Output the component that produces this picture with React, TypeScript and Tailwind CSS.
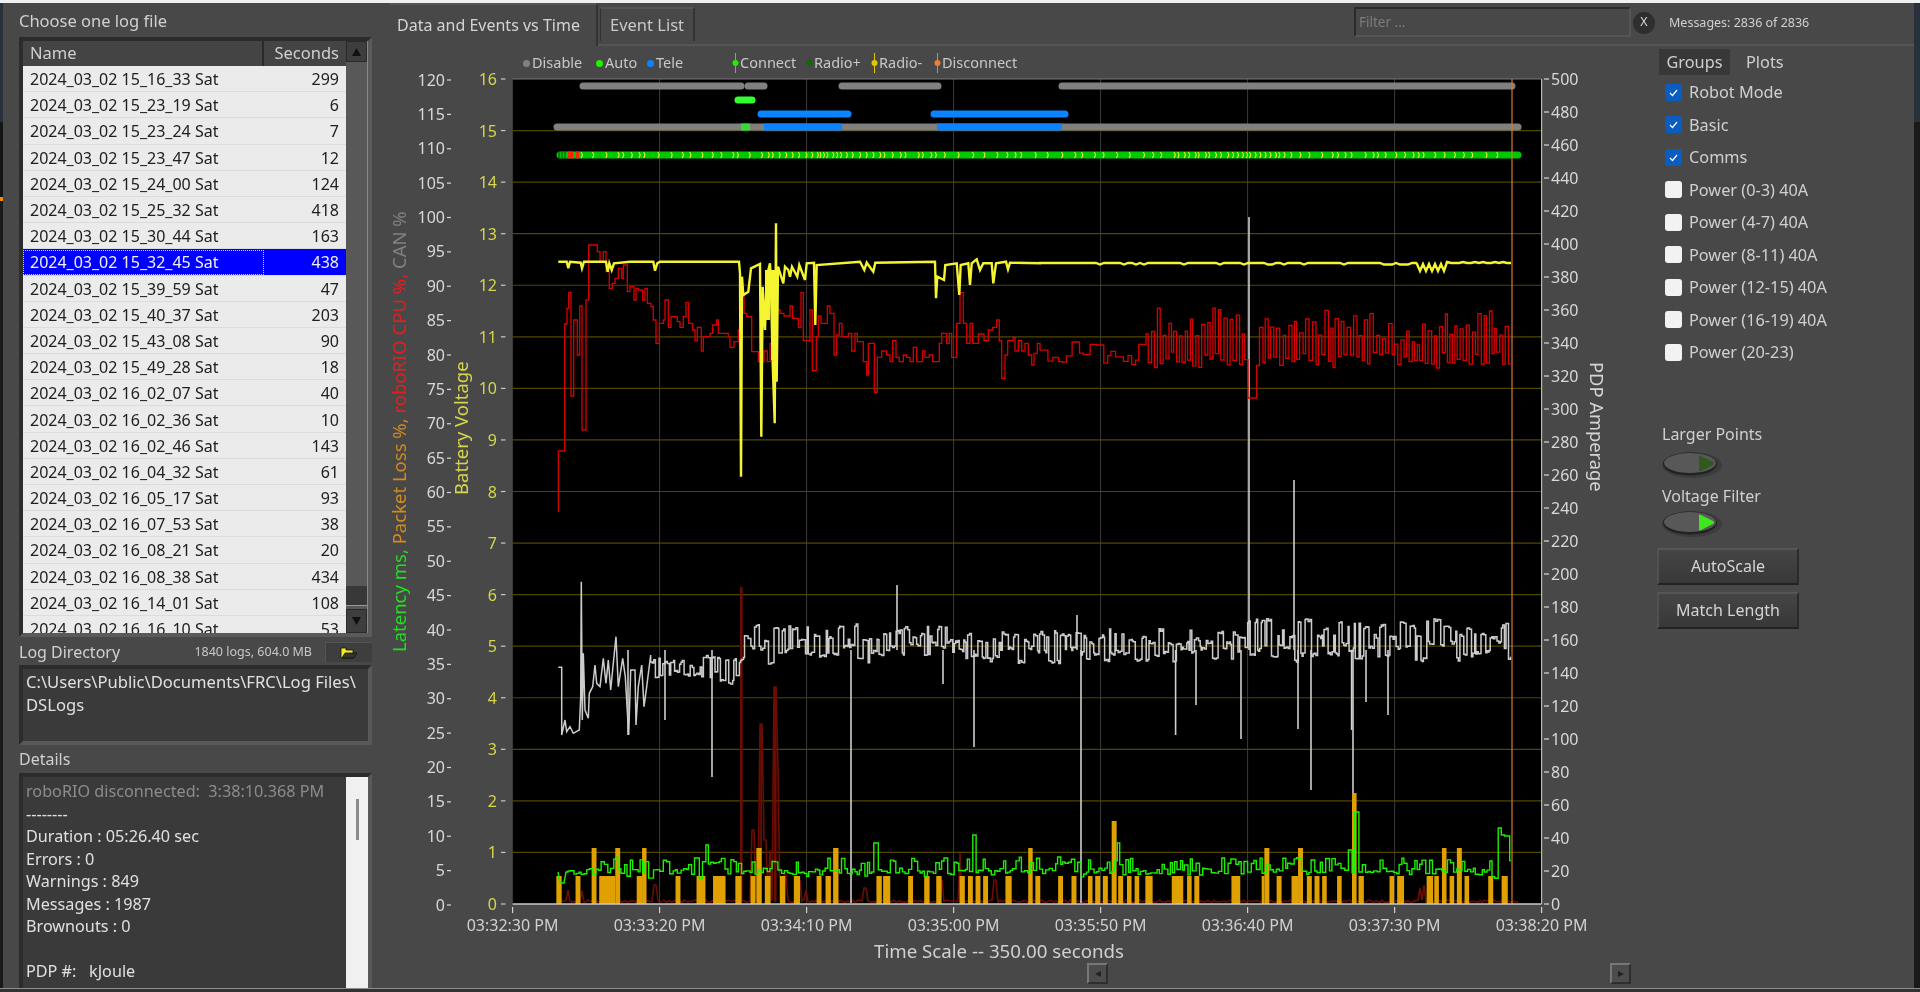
const font = { fontFamily: '"Noto Sans", "Liberation Sans", sans-serif' };

const logs: [string, number][] = [
  ["15_16_33", 299], ["15_23_19", 6], ["15_23_24", 7], ["15_23_47", 12], ["15_24_00", 124], ["15_25_32", 418],
  ["15_30_44", 163], ["15_32_45", 438], ["15_39_59", 47], ["15_40_37", 203], ["15_43_08", 90], ["15_49_28", 18],
  ["16_02_07", 40], ["16_02_36", 10], ["16_02_46", 143], ["16_04_32", 61], ["16_05_17", 93], ["16_07_53", 38],
  ["16_08_21", 20], ["16_08_38", 434], ["16_14_01", 108], ["16_16_10", 53],
];

const groups = [
  ["Robot Mode", true], ["Basic", true], ["Comms", true], ["Power (0-3) 40A", false], ["Power (4-7) 40A", false],
  ["Power (8-11) 40A", false], ["Power (12-15) 40A", false], ["Power (16-19) 40A", false], ["Power (20-23)", false],
] as [string, boolean][];

// little seeded random so the chart comes out the same every run
function rng(seed: number) {
  let a = seed;
  return () => {
    a = (a + 0x6d2b79f5) | 0;
    let t = Math.imul(a ^ (a >>> 15), 1 | a);
    t = (t + Math.imul(t ^ (t >>> 7), 61 | t)) ^ t;
    return ((t ^ (t >>> 14)) >>> 0) / 4294967296;
  };
}

const PL = 512.6, PR = 1541.6, PT = 79, PB = 904;
const line = (p: number[][]) => p.map((q, i) => (i ? "L" : "M") + q[0].toFixed(1) + " " + q[1].toFixed(1)).join(" ");

// CPU: [x, level] held until next x, read off a 3x crop
const redSteps = [67,693,74,312,81,265,86,218,93,528,101,300,112,405,119,258,126,630,138,240,146,75,172,95,180,125,190,95,198,155,208,205,217,190,225,175,235,145,245,175,250,135,262,215,270,200,282,240,288,205,295,210,308,240,315,205,322,250,333,260,340,300,348,370,358,310,370,300,375,240,385,322,393,290,412,305,420,322,430,290,438,248,446,310,458,330,465,362,472,322,484,393,490,350,510,340,518,315,530,300,535,340,565,350,570,382,582,365,595,330,605,230,612,280,620,290,635,395,655,425,660,340,665,425,672,393,682,425,690,370,697,340,712,270,720,280,732,288,750,258,758,295,775,322,783,218,790,362,810,270,817,452,829,350,835,288,843,310,862,258,870,280,882,405,890,345,898,310,906,350,925,340,935,393,945,340,952,365,970,425,980,465,985,370,1003,517,1012,412,1025,393,1040,405,1050,425,1058,362,1068,412,1078,425,1090,405,1100,412,1110,425,1120,382,1130,425,1148,393,1155,412,1168,405,1178,425,1198,370,1205,340,1220,370,1228,340,1235,412,1250,310,1260,218,1270,310,1280,370,1290,310,1298,370,1315,342,1332,362,1345,330,1358,322,1370,300,1378,362,1385,475,1395,405,1403,362,1420,352,1425,393,1435,362,1445,393,1455,370,1465,405,1475,435,1482,400,1492,370];

function redPath() {
  const pts: number[][] = [[558.3, 512], [558.3, 220 + 693 / 3]];
  for (let i = 0; i < redSteps.length; i += 2) {
    const x = 540 + redSteps[i] / 3, y = 220 + redSteps[i + 1] / 3;
    pts.push([x, pts[pts.length - 1][1]], [x, y]);
  }
  const r = rng(7);
  let x = 1040, up = true;
  while (x < 1511) {
    let y = 350 + r() * 16;
    if (x > 1145) {
      const top = x > 1370 && x < 1440 ? 322 : 308;
      y = up ? top + r() * 28 : 352 + r() * 16;
      if (Math.abs(x - 1251) < 3) y = 398;
    } else if (r() > 0.8) {
      y = 340 + r() * 8;
    }
    pts.push([x, pts[pts.length - 1][1]], [x, y]);
    up = !up;
    x += x > 1145 ? 2 + r() * 1.6 : 3 + r() * 5;
  }
  pts.push([1511, pts[pts.length - 1][1]]);
  return line(pts);
}

const yellowPts = [[55,125],[80,125],[85,145],[90,125],[122,128],[126,145],[132,125],[198,125],[203,155],[208,130],[215,150],[222,130],[270,125],[340,125],[345,152],[352,130],[360,125],[597,125],[600,160],[603,770],[606,170],[610,225],[625,215],[633,145],[660,132],[664,650],[668,200],[675,330],[680,170],[690,130],[692,170],[698,430],[704,610],[708,10],[710,485],[714,140],[730,190],[735,140],[745,150],[750,170],[756,140],[772,170],[778,135],[795,180],[800,130],[822,128],[826,315],[830,135],[960,125],[973,150],[980,128],[1000,155],[1006,128],[1185,125],[1188,235],[1192,170],[1212,180],[1216,135],[1250,130],[1258,225],[1262,135],[1285,130],[1290,195],[1295,130],[1310,118],[1320,150],[1330,130],[1355,130],[1360,190],[1368,130],[1398,125],[1404,148],[1410,128],[1500,130]];

function yellowPath() {
  const pts = yellowPts.map(([x, y]) => [540 + x / 3, 220 + y / 3]);
  const r = rng(3);
  for (let x = 1040; x < 1417; x += 4) pts.push([x, 263 + (r() > 0.8 ? 1.5 : 0)]);
  for (let x = 1417; x < 1447; x += 3) pts.push([x, x % 2 < 1 ? 271 : 264]);
  for (let x = 1447; x <= 1511; x += 4) pts.push([x, 263 - (r() > 0.6 ? 1 : 0)]);
  return line(pts);
}

const whiteStart = [[55,322],[65,322],[65,525],[75,480],[80,515],[90,500],[100,520],[118,510],[122,410],[124,65],[127,480],[130,280],[135,450],[145,475],[148,400],[158,380],[165,315],[170,370],[180,380],[190,295],[198,370],[205,300],[212,390],[220,310],[228,230],[235,380],[248,295],[256,350],[266,525],[272,330],[285,330],[288,495],[295,380],[305,315],[312,440],[320,380],[332,285]];

function whiteBand(x: number): [number, number] {
  if (x < 740) return [669, 14];
  if (x < 860) return [643, 24];
  if (x < 1000) return [648 - (x > 880 && x < 950 ? 8 : 0), 18];
  if (x < 1240) return [646, 17];
  return [640, 22];
}

function whitePath() {
  const pts = whiteStart.map(([x, y]) => [540 + x / 3, 560 + y / 3]);
  const r = rng(11);
  let x = pts[pts.length - 1][0], hi = true;
  while (x < 1511) {
    const [c, a] = whiteBand(x);
    const target = c + (hi ? -a : a) * (0.1 + r() * 0.85);
    const n = 1 + Math.floor(r() * 4);
    for (let j = 0; j < n; j++) {
      const y = target + (r() - 0.5) * 4;
      pts.push([x, pts[pts.length - 1][1]], [x, y]);
      x += 0.9 + r() * 1.2;
    }
    hi = !hi;
  }
  return line(pts);
}

// down spikes [x, end y], up spikes go the same way
const whiteSpikes = [[628,735],[665,720],[712,777],[851,903],[943,684],[974,747],[1081,903],[1175.6,735],[1196,705],[1241,739],[1298,729],[1311,790],[1351.6,730],[1353,793],[1366,702],[1388,715],[1249,217],[1294,480],[897,585],[1077,615]];

function greenPath() {
  const pts: number[][] = [[558, 872], [560, 883], [564, 883], [566, 872]];
  const r = rng(21);
  const peaks: [number, number][] = [[705,845],[875,843],[972,835],[1117,843],[1355,812],[1356,812],[1357,822],[1499,828],[1502,835],[1504,836],[1506,836],[1348,850],[696,858]];
  let x = 568, prev = 872;
  while (x < 1510) {
    const hit = peaks.find((p) => Math.abs(p[0] - x) < 1.7);
    let y = 868 + r() * 7;
    const q = r();
    if (q > 0.72) y = 857 + r() * 8;
    if (q < 0.05) y = 876 + r() * 3;
    if (hit) y = hit[1];
    pts.push([x, prev], [x, y]);
    prev = y;
    x += 1.8 + r() * 2;
  }
  pts.push([1511, prev]);
  return line(pts);
}

function darkRedPath() {
  const pts: number[][] = [[558, 902]];
  const r = rng(5);
  const bumps: [number, number][] = [[568,890],[582,891],[655,885],[753,830],[761,724],[765,840],[770,850],[775,687],[778,770],[785,875],[800,880],[806,890],[865,888],[942,880],[960,853],[995,880],[1420,888],[1424,885],[1430,892]];
  for (let x = 558; x < 1520; x += 2) {
    const b = bumps.find((p) => Math.abs(p[0] - x) < 1.2);
    pts.push([x, b ? b[1] : 900 + r() * 2.6]);
  }
  return line(pts);
}

// loss bars, [x0, x1, top y]
const LOW = 876, TALL = 848;
const lossA = [[395,407,LOW],[438,449,LOW],[474,485,TALL],[491,527,LOW],[527,538,TALL],[575,587,LOW],[587,597,TALL],[662,673,LOW],[709,729,LOW],[746,774,LOW],[796,810,LOW],[830,841,LOW],[843,855,TALL],[862,875,LOW],[896,908,LOW],[927,941,LOW],[978,989,LOW],[998,1010,LOW],[1015,1027,TALL],[1112,1124,LOW],[1127,1143,LOW],[1183,1194,LOW],[1219,1231,LOW],[1246,1258,LOW],[1298,1310,LOW],[1317,1328,LOW],[1334,1345,LOW],[1351,1362,LOW],[1401,1415,LOW],[1452,1462,TALL],[1468,1479,LOW],[1519,1530,LOW]];
const lossB = [[30,43,LOW],[73,85,LOW],[92,105,LOW],[112,125,LOW],[135,148,821],[152,165,LOW],[175,187,LOW],[195,207,LOW],[223,242,LOW],[292,322,LOW],[332,344,LOW],[351,364,LOW],[448,471,LOW],[527,534,LOW],[534,547,TALL],[566,579,LOW],[605,622,LOW],[622,635,TALL],[645,658,LOW],[665,678,LOW],[685,697,LOW],[724,736,LOW],[763,775,793],[780,794,LOW],[861,873,LOW],[881,899,LOW],[958,975,LOW],[978,990,LOW],[998,1010,TALL],[1018,1030,LOW],[1037,1050,TALL],[1057,1069,LOW],[1119,1132,LOW],[1154,1170,LOW]];
const lossBars = [
  ...lossA.map(([a, b, t]) => [380 + a / 2.24, 380 + b / 2.24, t]),
  ...lossB.map(([a, b, t]) => [1060 + a / 2.613, 1060 + b / 2.613, t]),
];

function commMarks() {
  const r = rng(31);
  const out: number[] = [];
  let x = 581;
  while (x < 1505) {
    out.push(x);
    const dense = (x > 760 && x < 880) || (x > 1165 && x < 1290);
    x += dense ? 2.5 + r() * 5 : 4 + r() * 11;
  }
  return out;
}

function Chart() {
  const volts = Array.from({ length: 17 }, (_, i) => i);
  const pct = Array.from({ length: 25 }, (_, i) => i * 5);
  const amps = Array.from({ length: 26 }, (_, i) => i * 20);
  const times = ["03:32:30 PM", "03:33:20 PM", "03:34:10 PM", "03:35:00 PM", "03:35:50 PM", "03:36:40 PM", "03:37:30 PM", "03:38:20 PM"];
  const h = PB - PT;
  const vy = (v: number) => PB - (v / 16) * h;
  return (
    <svg viewBox="389 70 1268 890" className="w-[1268px] h-[890px] block" style={font}>
      <rect x={PL} y={PT} width={PR - PL} height={h} fill="#000" />
      {times.map((_, i) => (
        <line key={i} x1={PL + i * 147} x2={PL + i * 147} y1={PT} y2={PB} stroke="#3c3c3c" strokeWidth="1" />
      ))}
      {volts.slice(1, 16).map((v) => (
        <line key={v} x1={PL} x2={PR} y1={vy(v)} y2={vy(v)} stroke="#504600" strokeWidth="1.2" />
      ))}

      <path d={darkRedPath()} fill="none" stroke="#6b0d00" strokeWidth="1.6" />
      <rect x="740" y="587" width="2.6" height="315" fill="#6b0d00" />
      <rect x="760.2" y="724" width="1.8" height="178" fill="#6b0d00" />
      <rect x="774" y="687" width="2.6" height="215" fill="#6b0d00" />
      {lossBars.map((b, i) => (
        <rect key={i} x={b[0]} y={b[2]} width={b[1] - b[0]} height={PB - b[2]} fill="#e0a000" />
      ))}
      <path d={whitePath()} fill="none" stroke="#cccccc" strokeWidth="1.5" />
      {whiteSpikes.map((s, i) => (
        <line key={i} x1={s[0]} x2={s[0]} y1={650} y2={s[1]} stroke="#cfcfcf" strokeWidth="1.6" />
      ))}
      <path d={redPath()} fill="none" stroke="#d80000" strokeWidth="1.3" />
      <path d={yellowPath()} fill="none" stroke="#f4f430" strokeWidth="2.4" />
      <rect x="765" y="270" width="5" height="50" fill="#f4f430" />
      <rect x="771" y="270" width="4" height="90" fill="#f4f430" />
      <path d={greenPath()} fill="none" stroke="#1cf000" strokeWidth="1.4" />

      {/* robot mode bars */}
      {[[583,741],[748,764],[842,938],[1062,1512]].map((b, i) => (
        <line key={i} x1={b[0]} x2={b[1]} y1={86} y2={86} stroke="#808080" strokeWidth="7" strokeLinecap="round" />
      ))}
      <line x1="738" x2="752" y1="100" y2="100" stroke="#33ff33" strokeWidth="7" strokeLinecap="round" />
      {[[761,848],[934,1065]].map((b, i) => (
        <line key={i} x1={b[0]} x2={b[1]} y1={114} y2={114} stroke="#0a84ff" strokeWidth="7" strokeLinecap="round" />
      ))}
      <line x1="557" x2="1518" y1="127" y2="127" stroke="#808080" strokeWidth="7" strokeLinecap="round" />
      <rect x="741" y="123.5" width="9" height="7" fill="#33dd33" />
      <rect x="764" y="123.5" width="78" height="7" fill="#0a84ff" />
      <rect x="937" y="123.5" width="125" height="7" fill="#0a84ff" />

      {/* comms strip */}
      <line x1="560" x2="1518" y1="155" y2="155" stroke="#00c800" strokeWidth="7" strokeLinecap="round" />
      {[559, 562, 565].map((x) => (
        <line key={x} x1={x} x2={x} y1="152" y2="158" stroke="#004800" strokeWidth="1" />
      ))}
      <rect x="568" y="151.5" width="5" height="7" fill="#ff2010" />
      <rect x="576" y="151.5" width="3" height="7" fill="#ff2010" />
      {commMarks().map((x, i) => (
        <path key={i} d={`M${x.toFixed(1)} 152 Q${(x + 2.6).toFixed(1)} 155 ${x.toFixed(1)} 158`} fill="none" stroke="#f2f220" strokeWidth="1.1" />
      ))}

      <line x1="1512" x2="1512" y1={PT} y2={PB} stroke="#d87a2a" strokeWidth="1.2" />
      <line x1={PL} x2={PR} y1={PT} y2={PT} stroke="#777" strokeWidth="1" />
      <line x1={PR} x2={PR} y1={PT} y2={PB} stroke="#b8b8b8" strokeWidth="1.2" />
      <line x1={PL} x2={PR} y1={PB} y2={PB} stroke="#c8c8c8" strokeWidth="1.6" />

      {/* axes */}
      {pct.map((v) => {
        const y = PB - (v / 120) * h;
        return (
          <g key={v}>
            <text x="445" y={y + 6.5} textAnchor="end" fontSize="16" fill="#d8d8d8">{v}</text>
            <line x1="447" x2="451" y1={y + 1} y2={y + 1} stroke="#d8d8d8" strokeWidth="1.2" />
          </g>
        );
      })}
      {volts.map((v) => (
        <g key={v}>
          <text x="497" y={vy(v) + 6} textAnchor="end" fontSize="16" fill="#d6d64c">{v}</text>
          <line x1="501" x2="505.5" y1={vy(v)} y2={vy(v)} stroke="#c8c8c8" strokeWidth="1.2" />
        </g>
      ))}
      {amps.map((v) => {
        const y = PB - (v / 500) * h;
        return (
          <g key={v}>
            <line x1="1544" x2="1549" y1={y} y2={y} stroke="#d8d8d8" strokeWidth="1.2" />
            <text x="1551" y={y + 6} fontSize="16" fill="#d8d8d8">{v}</text>
          </g>
        );
      })}
      {times.map((t, i) => (
        <g key={t}>
          <line x1={PL + i * 147} x2={PL + i * 147} y1="907" y2="913" stroke="#d0d0d0" strokeWidth="1.2" />
          <text x={PL + i * 147} y="931" textAnchor="middle" fontSize="16" fill="#d0d0d0">{t}</text>
        </g>
      ))}
      <text x="999" y="958" textAnchor="middle" fontSize="18.7" fill="#d0d0d0">Time Scale -- 350.00 seconds</text>
      <text transform="rotate(-90 406 652)" x="406" y="652" fontSize="18.5">
        <tspan fill="#22dd22">Latency ms, </tspan>
        <tspan fill="#d08a20">Packet Loss %, </tspan>
        <tspan fill="#e02020">roboRIO CPU %, </tspan>
        <tspan fill="#808080"> CAN %</tspan>
      </text>
      <text transform="rotate(-90 468 495)" x="468" y="495" fontSize="18.5" fill="#d6d64c">Battery Voltage</text>
      <text transform="rotate(90 1590 362)" x="1590" y="362" fontSize="18.3" fill="#d4d4d4">PDP Amperage</text>
    </svg>
  );
}

function LegendDot({ color }: { color: string }) {
  return <span className="w-[7px] h-[7px] rounded-full mr-[2px] shrink-0" style={{ background: color }} />;
}

function LegendPin({ color }: { color: string }) {
  return (
    <svg width="7" height="20" viewBox="0 0 7 20" className="mr-[1px] shrink-0">
      <line x1="3.5" x2="3.5" y1="0" y2="20" stroke={color} strokeWidth="1" />
      <circle cx="3.5" cy="10" r="3" fill={color} />
    </svg>
  );
}

function Legend() {
  return (
    <div className="h-[24px] flex items-center pl-[134px] pt-[10px] text-[14.5px] text-[#c8c8c8]">
      <div className="w-[73px] flex items-center"><LegendDot color="#808080" />Disable</div>
      <div className="w-[51px] flex items-center"><LegendDot color="#22ee00" />Auto</div>
      <div className="w-[85px] flex items-center"><LegendDot color="#0a84ff" />Tele</div>
      <div className="w-[74px] flex items-center"><LegendPin color="#22ee00" />Connect</div>
      <div className="w-[65px] flex items-center"><LegendPin color="#0c6a00" />Radio+</div>
      <div className="w-[63px] flex items-center"><LegendPin color="#e0c800" />Radio-</div>
      <div className="flex items-center"><LegendPin color="#f08030" />Disconnect</div>
    </div>
  );
}

function Toggle({ on }: { on: boolean }) {
  return (
    <svg width="62" height="28" viewBox="0 0 62 28" className="block">
      <ellipse cx="31" cy="15" rx="30" ry="13" fill="#3c3c3c" />
      <ellipse cx="29" cy="14" rx="27" ry="11.5" fill="#222" />
      <ellipse cx="29" cy="13" rx="26" ry="10" fill="#585858" />
      <path d="M38 6.5 Q38 5 40 6 L52 12 Q54 13.5 52 15 L40 21 Q38 22 38 20.5 Z" fill={on ? "#3fe81e" : "#2f5a1c"} />
    </svg>
  );
}

function Bevel({ label }: { label: string }) {
  return (
    <button className="w-[142px] h-[37px] bg-gradient-to-b from-[#454545] to-[#383838] text-[#d4d4d4] text-[16px] border-2 border-t-[#565656] border-l-[#505050] border-r-[#2a2a2a] border-b-[#222]">
      {label}
    </button>
  );
}

function ScrollArrow({ dir }: { dir: "left" | "right" }) {
  return (
    <div className="w-[21px] h-[21px] border-2 border-t-[#777] border-l-[#777] border-r-[#2e2e2e] border-b-[#2e2e2e] bg-[#4c4c4c] flex items-center justify-center">
      <svg width="8" height="8" viewBox="0 0 8 8">
        <path d={dir === "left" ? "M7 1 L1 4 L7 7 Z" : "M1 1 L7 4 L1 7 Z"} fill="#222" />
      </svg>
    </div>
  );
}

function LeftPanel() {
  return (
    <div className="w-[381px] shrink-0 pl-[16px] pr-[9px] flex flex-col text-[#d0d0d0]">
      <div className="h-[34px] pt-[2px] flex items-center text-[16.5px]">Choose one log file</div>

      <div className="h-[600px] w-[353px] border-4 border-t-[#2c2c2c] border-l-[#2c2c2c] border-r-[#5a5a5a] border-b-[#5a5a5a] flex">
        <div className="w-[323px] flex flex-col overflow-hidden">
          <div className="h-[25px] shrink-0 flex bg-[#3e3e3e] text-[16.5px]">
            <div className="w-[241px] pl-[7px] border-r-2 border-[#2a2a2a] bg-[#444] flex items-center">Name</div>
            <div className="flex-1 pr-[7px] bg-[#444] flex items-center justify-end">Seconds</div>
          </div>
          {logs.map(([t, s]) => {
            const sel = t === "15_32_45";
            return (
              <div
                key={t}
                className={
                  "h-[26.2px] shrink-0 flex items-center pt-[1px] text-[16px] border-b border-[#dcdcdc] " +
                  (sel ? "bg-[#0000ff] text-[#f0f0f0]" : "bg-[#ebebeb] text-[#202020]")
                }
              >
                <div className={"w-[241px] h-full pl-[7px] flex items-center whitespace-nowrap " + (sel ? "outline-1 outline-dotted -outline-offset-1 outline-[#e0e060]" : "")}>
                  2024_03_02 {t} Sat
                </div>
                <div className="flex-1 pr-[7px] text-right">{s}</div>
              </div>
            );
          })}
        </div>
        <div className="flex-1 bg-[#585858] border-r border-[#888] flex flex-col justify-between">
          <div className="h-[21px] bg-[#3e3e3e] border border-[#2a2a2a] flex items-center justify-center">
            <svg width="9" height="8" viewBox="0 0 9 8"><path d="M4.5 0 L9 8 L0 8 Z" fill="#111" /></svg>
          </div>
          <div>
            <div className="h-[20px] bg-[#383838] border-b border-[#999]" />
            <div className="h-[24px] bg-[#3e3e3e] border border-[#2a2a2a] mt-[3px] flex items-center justify-center">
              <svg width="9" height="8" viewBox="0 0 9 8"><path d="M0 0 L9 0 L4.5 8 Z" fill="#111" /></svg>
            </div>
          </div>
        </div>
      </div>

      <div className="h-[20px] mt-[5px] w-[353px] flex items-center">
        <span className="text-[16px]">Log Directory</span>
        <span className="ml-auto text-[12.5px] text-[#c8c8c8]">1840 logs, 604.0 MB</span>
        <div className="w-[47px] h-[20px] ml-[13px] bg-[#3e3e3e] border-l border-t border-[#555] flex items-center justify-center">
          <svg width="18" height="12" viewBox="0 0 18 12">
            <path d="M1 1 H6 V3 H13 V11 H1 Z" fill="#f4ea1c" stroke="#111" strokeWidth="0.8" />
            <path d="M5 6 H17 L14 11 H2 Z" fill="#333" stroke="#111" strokeWidth="0.8" />
          </svg>
        </div>
      </div>
      <div className="h-[80px] w-[353px] mt-[3px] border-4 border-t-[#2c2c2c] border-l-[#2c2c2c] border-r-[#585858] border-b-[#585858] bg-[#3a3a3a] px-[3px] pt-[1px] text-[16.6px] leading-[23px] text-[#e0e0e0] whitespace-nowrap">
        C:\Users\Public\Documents\FRC\Log Files\<br />DSLogs
      </div>

      <div className="h-[28px] flex items-center text-[16px]">Details</div>
      <div className="flex-1 min-h-0 w-[353px] border-4 border-b-0 border-t-[#2c2c2c] border-l-[#2c2c2c] border-r-[#585858] bg-[#3a3a3a] flex">
        <div className="flex-1 pl-[3px] pt-[3px] text-[16.2px] leading-[22.5px] text-[#e0e0e0] whitespace-pre">
          <div className="text-[#8c8c8c]">roboRIO disconnected:  3:38:10.368 PM</div>
          <div>--------</div>
          <div>Duration : 05:26.40 sec</div>
          <div>Errors : 0</div>
          <div>Warnings : 849</div>
          <div>Messages : 1987</div>
          <div>Brownouts : 0</div>
          <div>&nbsp;</div>
          <div>PDP #:   kJoule</div>
        </div>
        <div className="w-[22px] bg-[#f0f0f0] pt-[22px] flex justify-center shrink-0">
          <div className="w-[3px] h-[41px] bg-[#8a8a8a]" />
        </div>
      </div>
    </div>
  );
}

function SidePanel() {
  return (
    <div className="w-[257px] shrink-0 pt-[3px] text-[#d0d0d0]">
      <div className="flex items-center text-[16.3px] h-[26px] ml-[2px]">
        <div className="w-[71px] h-full bg-[#383838] flex items-center justify-center">Groups</div>
        <div className="ml-[16px]">Plots</div>
      </div>
      <div className="pt-[1px]">
        {groups.map(([g, on]) => (
          <div key={g} className="h-[32.5px] flex items-center pl-[8px] text-[16.3px]">
            <span
              className={
                "w-[17px] h-[17px] rounded-[3px] flex items-center justify-center mr-[7px] " +
                (on ? "bg-[#0a5cc0]" : "bg-[#f2f2f2]")
              }
            >
              {on && (
                <svg width="11" height="11" viewBox="0 0 11 11">
                  <path d="M2 6 L4.5 8.5 L9 3" fill="none" stroke="#fff" strokeWidth="1.2" />
                </svg>
              )}
            </span>
            {g}
          </div>
        ))}
      </div>
      <div className="mt-[55px] ml-[5px] h-[20px] flex items-center text-[16px]">Larger Points</div>
      <div className="ml-[4px] mt-[6px]"><Toggle on={false} /></div>
      <div className="ml-[5px] mt-[8px] h-[20px] flex items-center text-[16px]">Voltage Filter</div>
      <div className="ml-[4px] mt-[3px]"><Toggle on={true} /></div>
      <div className="mt-[11px]"><Bevel label="AutoScale" /></div>
      <div className="mt-[7px]"><Bevel label="Match Length" /></div>
    </div>
  );
}

export default function App() {
  return (
    <div className="w-[1920px] h-[992px] bg-[#484848] overflow-hidden flex flex-col blur-[0.4px]" style={font}>
      <div className="h-[3px] shrink-0 bg-[#f0f0f0]" />
      <div className="flex-1 min-h-0 flex">
        <div className="w-[3px] shrink-0 flex flex-col">
          <div className="h-[119px] bg-[#28303a]" />
          <div className="h-[75px] bg-[#141414]" />
          <div className="h-[4px] bg-[#f08a10]" />
          <div className="flex-1 bg-[#1a1a1a]" />
        </div>
        <LeftPanel />
        <div className="w-[5px] shrink-0" />
        <div className="flex-1 min-w-0 flex flex-col">
          {/* tab bar */}
          <div className="h-[43px] shrink-0 flex items-center border-b-2 border-[#555]">
            <div className="w-[209px] h-[43px] mt-[2px] pl-[8px] pb-[1px] bg-[#484848] border-t-2 border-t-[#555] border-r-2 border-r-[#333] flex items-center text-[16px] text-[#d4d4d4]">
              Data and Events vs Time
            </div>
            <div className="w-[95px] h-[34px] ml-[2px] mt-[1px] border-t-2 border-l border-r-2 border-t-[#555] border-l-[#333] border-r-[#333] flex items-center justify-center text-[16.5px] text-[#c8c8c8]">
              Event List
            </div>
            <div className="ml-[659px] w-[277px] h-[30px] mt-[-3px] border-2 border-t-[#2a2a2a] border-l-[#2a2a2a] border-r-[#555] border-b-[#555] flex items-center pl-[3px] text-[13.5px] text-[#7c7c7c]">
              Filter ...
            </div>
            <div className="w-[22px] h-[22px] ml-[2px] mt-[-2px] rounded-full bg-[#2e2e2e] flex items-center justify-center text-[12.5px] text-[#d8d8d8]">
              X
            </div>
            <div className="ml-[14px] mt-[-1px] text-[12.5px] text-[#d0d0d0] whitespace-nowrap">Messages: 2836 of 2836</div>
          </div>
          <div className="flex-1 min-h-0 flex">
            <div className="w-[1268px] shrink-0 flex flex-col">
              <Legend />
              <Chart />
              <div className="flex pl-[698px] pt-[3px]">
                <ScrollArrow dir="left" />
                <div className="w-[502px]" />
                <ScrollArrow dir="right" />
              </div>
            </div>
            <SidePanel />
          </div>
        </div>
        <div className="w-[6px] shrink-0 flex flex-col">
          <div className="h-[119px] bg-[#28303a]" />
          <div className="flex-1 bg-[#1a1a1a]" />
        </div>
      </div>
      <div className="h-[1px] shrink-0 bg-[#8c8c8c]" />
      <div className="h-[3px] shrink-0 bg-[#333]" />
    </div>
  );
}
